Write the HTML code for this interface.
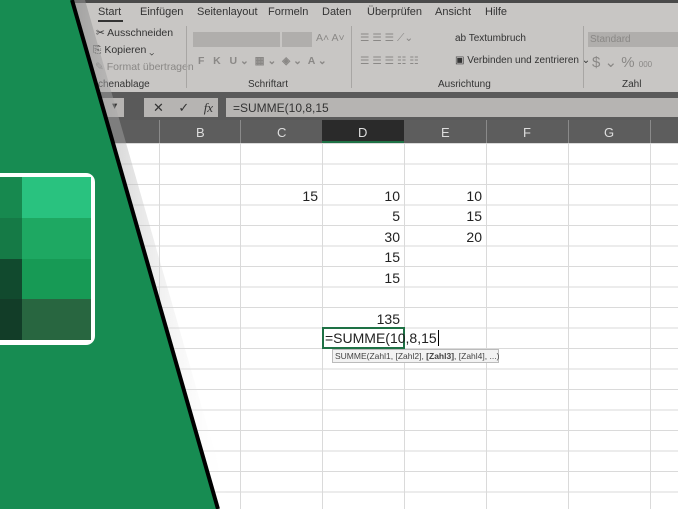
<!DOCTYPE html>
<html><head><meta charset="utf-8"><style>
*{margin:0;padding:0;box-sizing:border-box}
body{width:678px;height:509px;overflow:hidden;position:relative;background:#fff;font-family:"Liberation Sans",sans-serif}
.a{position:absolute;white-space:nowrap}
.rib{font-size:10.5px;color:#333}
.dim{color:#8a8886}
.num{font-size:14px;color:#222;text-align:right;width:78px}
</style></head><body>
<div class="a" style="left:0;top:0;width:678px;height:92px;background:#c8c6c4"></div>
<div class="a" style="left:0;top:0;width:678px;height:3px;background:#4a4a4a"></div>
<div class="a rib" style="left:98px;top:6px;font-size:11px">Start</div>
<div class="a" style="left:98px;top:20px;width:25px;height:2px;background:#333"></div>
<div class="a rib" style="left:140px;top:6px;font-size:11px">Einfügen</div>
<div class="a rib" style="left:197px;top:6px;font-size:11px">Seitenlayout</div>
<div class="a rib" style="left:268px;top:6px;font-size:11px">Formeln</div>
<div class="a rib" style="left:322px;top:6px;font-size:11px">Daten</div>
<div class="a rib" style="left:367px;top:6px;font-size:11px">Überprüfen</div>
<div class="a rib" style="left:435px;top:6px;font-size:11px">Ansicht</div>
<div class="a rib" style="left:485px;top:6px;font-size:11px">Hilfe</div>

<div class="a rib" style="left:96px;top:27px">✂ Ausschneiden</div>
<div class="a rib" style="left:93px;top:44px">⎘ Kopieren ⌄</div>
<div class="a rib dim" style="left:95px;top:61px">✎ Format übertragen</div>
<div class="a rib" style="left:98px;top:79px;font-size:10px">chenablage</div>
<div class="a" style="left:186px;top:26px;width:1px;height:62px;background:#a8a6a4"></div>
<div class="a" style="left:193px;top:32px;width:87px;height:15px;background:#b0aeac"></div>
<div class="a" style="left:282px;top:32px;width:30px;height:15px;background:#b0aeac"></div>
<div class="a rib dim" style="left:316px;top:32px">A˄ A˅</div>
<div class="a rib dim" style="left:198px;top:55px;font-weight:bold">F&nbsp;&nbsp;&nbsp;K&nbsp;&nbsp;&nbsp;U ⌄ &nbsp;▦ ⌄ &nbsp;◈ ⌄ &nbsp;A ⌄</div>
<div class="a rib" style="left:248px;top:79px;font-size:10px">Schriftart</div>
<div class="a" style="left:351px;top:26px;width:1px;height:62px;background:#a8a6a4"></div>
<div class="a rib dim" style="left:360px;top:32px">☰ ☰ ☰ ⟋⌄</div>
<div class="a rib dim" style="left:360px;top:55px">☰ ☰ ☰ ☷ ☷</div>
<div class="a rib" style="left:455px;top:33px;font-size:10px">ab Textumbruch</div>
<div class="a rib" style="left:455px;top:55px;font-size:10px">▣ Verbinden und zentrieren ⌄</div>
<div class="a rib" style="left:438px;top:79px;font-size:10px">Ausrichtung</div>
<div class="a" style="left:583px;top:26px;width:1px;height:62px;background:#a8a6a4"></div>
<div class="a" style="left:588px;top:32px;width:90px;height:15px;background:#b0aeac"></div>
<div class="a rib dim" style="left:590px;top:34px;font-size:10px">Standard</div>
<div class="a rib dim" style="left:592px;top:53px;font-size:15px">$ ⌄ % <span style="font-size:8px">000</span></div>
<div class="a rib" style="left:622px;top:79px;font-size:10px">Zahl</div>
<div class="a" style="left:0;top:92px;width:678px;height:31px;background:#5a5a5a"></div>
<div class="a" style="left:0;top:98px;width:678px;height:19px;background:#b6b4b2"></div>
<div class="a" style="left:124px;top:98px;width:20px;height:19px;background:#5a5a5a"></div>
<div class="a" style="left:218px;top:98px;width:8px;height:19px;background:#5a5a5a"></div>
<div class="a rib" style="left:112px;top:100px">▾</div>
<div class="a rib" style="left:153px;top:100px;font-size:13px">✕ &nbsp;&nbsp;&nbsp;✓ &nbsp;&nbsp;&nbsp;<i style="font-family:'Liberation Serif'">fx</i></div>
<div class="a rib" style="left:233px;top:101px;font-size:12px">=SUMME(10,8,15</div>
<div class="a" style="left:0;top:120px;width:678px;height:23px;background:#5d5d5d"></div>
<div class="a" style="left:322px;top:120px;width:82px;height:23px;background:#2a2a2a;border-bottom:2px solid #1e7145"></div>
<div class="a" style="left:159px;top:120px;width:1px;height:23px;background:#8a8a8a"></div>
<div class="a" style="left:240px;top:120px;width:1px;height:23px;background:#8a8a8a"></div>
<div class="a" style="left:486px;top:120px;width:1px;height:23px;background:#8a8a8a"></div>
<div class="a" style="left:568px;top:120px;width:1px;height:23px;background:#8a8a8a"></div>
<div class="a" style="left:650px;top:120px;width:1px;height:23px;background:#8a8a8a"></div>
<div class="a" style="left:196px;top:125px;color:#ddd;font-size:13px">B</div>
<div class="a" style="left:277px;top:125px;color:#ddd;font-size:13px">C</div>
<div class="a" style="left:358px;top:125px;color:#ddd;font-size:13px">D</div>
<div class="a" style="left:441px;top:125px;color:#ddd;font-size:13px">E</div>
<div class="a" style="left:523px;top:125px;color:#ddd;font-size:13px">F</div>
<div class="a" style="left:604px;top:125px;color:#ddd;font-size:13px">G</div>
<div class="a" style="left:0;top:143px;width:678px;height:366px;
background-image:linear-gradient(#dadada 1px,transparent 1px);background-size:100% 20.5px;background-position:0 20.5px"></div>
<div class="a" style="left:159px;top:143px;width:1px;height:366px;background:#dadada"></div>
<div class="a" style="left:240px;top:143px;width:1px;height:366px;background:#dadada"></div>
<div class="a" style="left:322px;top:143px;width:1px;height:366px;background:#dadada"></div>
<div class="a" style="left:404px;top:143px;width:1px;height:366px;background:#dadada"></div>
<div class="a" style="left:486px;top:143px;width:1px;height:366px;background:#dadada"></div>
<div class="a" style="left:568px;top:143px;width:1px;height:366px;background:#dadada"></div>
<div class="a" style="left:650px;top:143px;width:1px;height:366px;background:#dadada"></div>
<div class="a num" style="left:240px;top:188px">15</div>
<div class="a num" style="left:322px;top:188px">10</div>
<div class="a num" style="left:404px;top:188px">10</div>
<div class="a num" style="left:322px;top:208px">5</div>
<div class="a num" style="left:404px;top:208px">15</div>
<div class="a num" style="left:322px;top:229px">30</div>
<div class="a num" style="left:404px;top:229px">20</div>
<div class="a num" style="left:322px;top:249px">15</div>
<div class="a num" style="left:322px;top:270px">15</div>
<div class="a num" style="left:322px;top:311px">135</div>
<div class="a" style="left:322px;top:327px;width:83px;height:22px;border:2px solid #1e7145;background:#fff"></div>
<div class="a" style="left:325px;top:330px;font-size:14px;color:#222">=SUMME(10,8,15<span style="border-left:1px solid #000;margin-left:1px"></span></div>
<div class="a" style="left:332px;top:349px;width:167px;height:14px;border:1px solid #bbb;background:#f2f2f2;font-size:8.5px;color:#444;padding:1px 2px">SUMME(Zahl1, [Zahl2], <b>[Zahl3]</b>, [Zahl4], ...)</div>
<svg class="a" style="left:0;top:0" width="678" height="509">
<defs>
<linearGradient id="sh" x1="0" y1="0" x2="1" y2="0"><stop offset="0" stop-color="#888" stop-opacity=".6"/><stop offset="1" stop-color="#fff" stop-opacity="0"/></linearGradient>
</defs>
<polygon points="73,0 85,0 231,509 219,509" fill="url(#sh)"/>
<polygon points="0,0 72,0 218,509 0,509" fill="#178c52"/>
<line x1="72" y1="0" x2="218" y2="509" stroke="#000" stroke-width="4"/>
<g>
<rect x="-20" y="173" width="115" height="172" rx="9" fill="#fff"/>
<rect x="0" y="177" width="22" height="41" fill="#17894f"/>
<rect x="22" y="177" width="69" height="41" fill="#29c27f"/>
<rect x="0" y="218" width="22" height="41" fill="#157a46"/>
<rect x="22" y="218" width="69" height="41" fill="#1ea862"/>
<rect x="0" y="259" width="22" height="40" fill="#114a2e"/>
<rect x="22" y="259" width="69" height="40" fill="#179a55"/>
<rect x="0" y="299" width="22" height="41" fill="#123d28"/>
<rect x="22" y="299" width="69" height="41" fill="#286640"/>
</g>
</svg>
</body></html>
